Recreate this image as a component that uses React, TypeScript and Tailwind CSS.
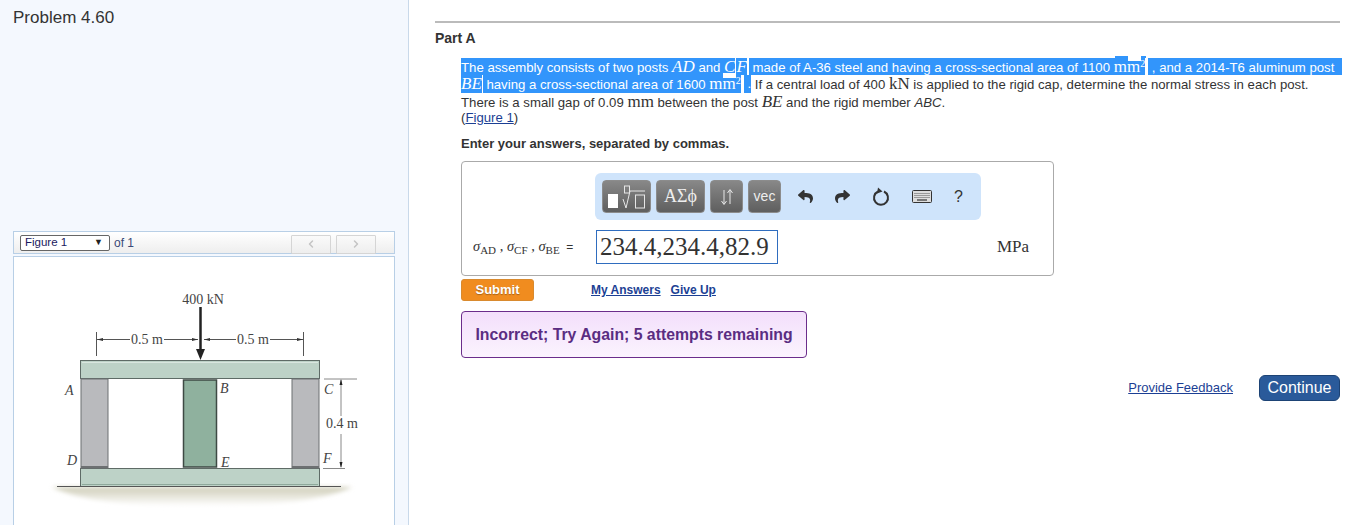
import { FaReply, FaShare } from "react-icons/fa";
import { ChevronLeft, ChevronRight } from "lucide-react";

const arial = "font-['Liberation_Sans',Arial,sans-serif]";
const serif = "font-['Liberation_Serif','Times_New_Roman',serif]";

const Sel = ({ children, className = "", tall = false }: { children: React.ReactNode; className?: string; tall?: boolean }) => (
  <span className={`inline-block bg-[#3295fb] align-top text-white ${tall ? "h-[18px] leading-[18px]" : "h-[17px] leading-[17px]"} ${className}`}>{children}</span>
);

const MathText = ({ children, italic = false }: { children: React.ReactNode; italic?: boolean }) => (
  <span className={`${serif} text-[17px] leading-none ${italic ? "italic" : ""}`}>{children}</span>
);

const SelMm = () => (
  <span className="relative inline-block">
    <MathText>mm</MathText>
    <sup className={`${serif} text-[10px] leading-none`}>2</sup>
    <span className="absolute -top-[2px] left-[1px] h-[2px] w-[13px] bg-[#3295fb]" />
    <span className="absolute -top-[2px] left-[14px] h-[5px] w-[13px] bg-white" />
    <span className="absolute -top-[2px] left-[27px] h-[2px] w-[5px] bg-[#3295fb]" />
  </span>
);

const RadicalIcon = () => (
  <svg width="38" height="24" viewBox="0 0 38 24" fill="none">
    <rect x="0" y="9" width="10" height="14" fill="#fff" />
    <rect x="16.500" y="1" width="5" height="7" stroke="#e6e6e6" />
    <path d="M15 14l3 9 4-17h15" stroke="#e6e6e6" strokeWidth="1" />
    <rect x="27.500" y="10" width="9" height="13" stroke="#e6e6e6" />
  </svg>
);

const ArrowsIcon = () => (
  <svg width="14" height="16" viewBox="0 0 14 16" fill="none" stroke="#e8e8e8" strokeWidth="1">
    <path d="M4 1v14M1.500 12L4 15.500 6.500 12" />
    <path d="M10 15V1M7.500 4L10 .5 12.500 4" />
  </svg>
);

const ResetIcon = () => (
  <svg width="18" height="20" viewBox="0 0 18 20" fill="none">
    <path d="M6 4.500a7 7 0 1 0 6 0" stroke="#333" strokeWidth="2" />
    <path d="M6 0.500l4.500 4-5.500 2z" fill="#333" />
  </svg>
);

const KeyboardIcon = () => (
  <svg width="20" height="13" viewBox="0 0 20 13">
    <rect x=".5" y=".5" width="19" height="12" rx="1" fill="#ddd" stroke="#333" />
    <path d="M2.500 3.500h15M2.500 5.500h15M2.500 7.500h15" stroke="#555" strokeWidth="1" strokeDasharray="1 1" />
    <path d="M5 10h10" stroke="#555" strokeWidth="1.500" />
  </svg>
);

const toolBtn =
  "flex h-[33px] items-center justify-center rounded-[4px] border border-[#8c8c8c] bg-gradient-to-b from-[#888888] to-[#5f5f5f] text-[#eeeeee]";

const navBtn =
  "flex h-[19px] w-[40px] items-center justify-center rounded-[1px] border border-[#d5d5d5] bg-gradient-to-b from-[#fafafa] to-[#eeeeee] text-[#c4c4c4]";

const Diagram = () => (
  <svg width="380" height="268" viewBox="14 257 380 268" className="block">
    <defs>
      <linearGradient id="shadow" x1="0" y1="0" x2="0" y2="1">
        <stop offset="0" stopColor="#cfcdb8" />
        <stop offset="1" stopColor="#ffffff" />
      </linearGradient>
      <filter id="soft" x="-10%" y="-50%" width="120%" height="200%">
        <feGaussianBlur stdDeviation="2" />
      </filter>
    </defs>
    <path d="M52 487H352C322 501 270 506 200 506S80 501 52 487z" fill="url(#shadow)" filter="url(#soft)" />
    <rect x="80.500" y="360.500" width="239" height="18" fill="#bdd2c7" stroke="#5e6b66" />
    <path d="M82 362.500H318" stroke="#d9e6df" />
    <rect x="80.500" y="468.500" width="239" height="18" fill="#bdd2c7" stroke="#5e6b66" />
    <path d="M82 484.500H318" stroke="#8fa89b" />
    <rect x="81" y="379" width="27" height="89" fill="#b9babd" stroke="#6d7072" />
    <rect x="292" y="379" width="27" height="89" fill="#b9babd" stroke="#6d7072" />
    <path d="M81 467H108M292 467H319" stroke="#6d7072" strokeWidth="2" />
    <rect x="183.500" y="380" width="33" height="87" fill="#8fb19e" stroke="#3e4a44" strokeWidth="1.500" />
    <path d="M57 486.500H341" stroke="#555" />
    <g stroke="#555" strokeWidth="1" fill="none">
      <path d="M96.500 332V356M303.500 332V356" />
      <path d="M97 339.500H130M164 339.500H198M204 339.500H236M270 339.500H303" />
    </g>
    <path d="M97 339.500l6-1.500v3zM198 339.500l-6-1.500v3zM204 339.500l6-1.500v3zM303 339.500l-6-1.500v3z" fill="#333" />
    <path d="M200.500 307V350" stroke="#222" strokeWidth="2.500" />
    <path d="M196 349H205L200.500 360z" fill="#222" />
    <path d="M324 379H357M323 468.500H345" stroke="#888" />
    <path d="M341 380V416M341 434V467" stroke="#888" />
    <path d="M341 379l-1.500 6h3zM341 468l-1.500-6h3z" fill="#222" />
    <g fontFamily="'Liberation Serif', serif" fontSize="14" fill="#444">
      <text x="203" y="304" textAnchor="middle">400 kN</text>
      <text x="147" y="344" textAnchor="middle">0.5 m</text>
      <text x="253" y="344" textAnchor="middle">0.5 m</text>
      <text x="326" y="428">0.4 m</text>
      <g fontStyle="italic">
        <text x="65" y="395">A</text>
        <text x="220" y="393">B</text>
        <text x="324" y="394">C</text>
        <text x="67" y="465">D</text>
        <text x="221" y="467">E</text>
        <text x="323" y="463">F</text>
      </g>
    </g>
  </svg>
);

export default function App() {
  return (
    <div className={`flex h-[525px] w-[1359px] overflow-hidden bg-white text-[#333333] ${arial}`}>
      <aside className="h-full w-[409px] shrink-0 border-r border-[#c9d9ea] bg-[#f4f8fe] pl-[13px] pr-[13px]">
        <h1 className="pt-[9px] text-[17px] leading-[18px] text-[#333]">Problem 4.60</h1>
        <div className="mt-[204px] flex h-[23px] w-[382px] items-center border border-[#b8cfe6] bg-gradient-to-b from-white to-[#eeeeee] pl-[6px]">
          <div className="flex h-[16px] w-[90px] shrink-0 items-center justify-between rounded-[2px] border border-[#666] bg-white pl-[4px] pr-[6px] text-[11.500px] leading-none text-[#1a1a5e]">
            <span>Figure 1</span>
            <span className="text-[9px] text-[#222]">▼</span>
          </div>
          <span className="ml-[4px] w-[18px] shrink-0 whitespace-nowrap text-[12px] leading-none text-[#3a4a78]">of 1</span>
          <div className="ml-[159px] mt-[3px] flex gap-[5px]">
            <div className={navBtn}><ChevronLeft size={12} strokeWidth={3} /></div>
            <div className={navBtn}><ChevronRight size={12} strokeWidth={3} /></div>
          </div>
        </div>
        <div className="mt-[2px] h-[280px] w-[382px] border border-[#b8cfe6] bg-white">
          <Diagram />
        </div>
      </aside>

      <main className="w-[950px] min-w-0 pl-[26px] pr-[19px] pt-[21px]">
        <div className="border-t-2 border-[#bbbbbb] pt-[7px] text-[14px] font-bold leading-[17px]">Part A</div>

        <div className="ml-[26px] mt-[11px]">
          <div className="whitespace-nowrap text-[13.200px]">
            <div className="h-[17px] leading-[17px]">
              <Sel>The assembly consists of two posts <MathText italic>AD</MathText> and <MathText italic>C</MathText></Sel>
              <Sel className="border-l border-white"><MathText italic>F</MathText></Sel>
              <span className="inline-block w-[1px]" />
              <Sel className="border-l border-white">&nbsp;made of A-36 steel and having a cross-sectional area of 1100 <SelMm /></Sel>
              <span className="inline-block w-[3px]" />
              <Sel className="pt-[1px]">&nbsp;, and a 2014-T6 aluminum post&nbsp;&nbsp;</Sel>
            </div>
            <div className="h-[18px] leading-[18px]">
              <Sel tall className="border-r border-white"><MathText italic>BE</MathText></Sel>
              <Sel tall>&nbsp;having a cross-sectional area of 1600 <SelMm /></Sel>
              <span className="inline-block w-[3px]" />
              <Sel tall>&nbsp;.</Sel>&nbsp;If a central load of 400 <MathText>kN</MathText> is applied to the rigid cap, determine the normal stress in each post.
            </div>
            <div className="h-[16px] leading-[13px]">
              There is a small gap of 0.09 <MathText>mm</MathText> between the post <MathText italic>BE</MathText> and the rigid member <i>ABC</i>.
            </div>
            <div className="h-[17px] leading-[18px]">
              (<a className="text-[#1c3f94] underline">Figure 1</a>)
            </div>
          </div>

          <p className="mt-[9px] text-[13px] font-bold leading-[17px]">Enter your answers, separated by commas.</p>

          <section className="mt-[9px] flex h-[115px] w-[593px] flex-col rounded-[4px] border border-[#aaaaaa] pl-[11px] pr-[22px] pt-[11px]">
            <div className="ml-[122px] flex h-[47px] w-[386px] items-center rounded-[6px] bg-[#cfe4fb] pl-[7px]">
              <div className={`${toolBtn} w-[49px]`}><RadicalIcon /></div>
              <div className={`${toolBtn} ml-[5px] w-[49px] ${serif} text-[18px]`}>ΑΣϕ</div>
              <div className={`${toolBtn} ml-[5px] w-[33px]`}><ArrowsIcon /></div>
              <div className={`${toolBtn} ml-[5px] w-[33px] text-[14px]`}>vec</div>
              <div className="ml-[17px] flex w-[165px] items-center justify-between text-[#333]">
                <FaReply size={15} />
                <FaShare size={15} />
                <ResetIcon />
                <KeyboardIcon />
                <span className="text-[16px]">?</span>
              </div>
            </div>
            <div className="mt-[10px] flex items-center">
              <span className={`${serif} w-[123px] whitespace-nowrap text-[14.500px]`}>
                <i>σ</i><sub className="text-[11px]">AD</sub> , <i>σ</i><sub className="text-[11px]">CF</sub> , <i>σ</i><sub className="text-[11px]">BE</sub>
                <span className={`${arial} text-[12px]`}>&nbsp;&nbsp;=</span>
              </span>
              <div className={`${serif} flex h-[34px] w-[182px] items-center border border-[#2f6dbf] pl-[3px] text-[25px] text-[#333]`}>234.4,234.4,82.9</div>
              <span className={`${serif} ml-[219px] text-[17px] text-[#333]`}>MPa</span>
            </div>
          </section>

          <div className="mt-[3px] flex h-[22px] items-center">
            <button className="h-[22px] w-[73px] rounded-[3px] border border-[#d98a2e] bg-[#f08c1f] text-[13px] font-bold text-white [text-shadow:0_1px_1px_rgba(0,0,0,0.3)]">Submit</button>
            <a className="ml-[57px] text-[12px] font-bold text-[#1c3f94] underline">My Answers</a>
            <a className="ml-[10px] text-[12px] font-bold text-[#1c3f94] underline">Give Up</a>
          </div>

          <div className="mt-[10px] flex h-[47px] w-[346px] items-center justify-center rounded-[4px] border border-[#6b2d8b] bg-gradient-to-b from-[#f3dffb] to-[#fbf3fe] text-[15.800px] font-bold text-[#5a2d82]">
            Incorrect; Try Again; 5 attempts remaining
          </div>
        </div>

        <div className="mt-[17px] flex items-center justify-end">
          <a className="text-[13px] text-[#1c3f94] underline">Provide Feedback</a>
          <button className="ml-[26px] h-[26px] w-[81px] rounded-[6px] border border-[#1d4375] bg-[#2a5a9a] text-[16px] text-white">Continue</button>
        </div>
      </main>
    </div>
  );
}
